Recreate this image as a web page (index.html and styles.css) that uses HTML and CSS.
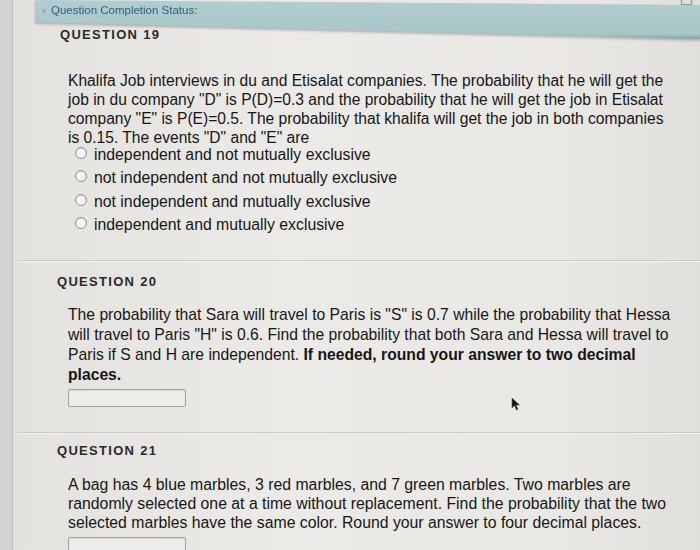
FILE: index.html
```html
<!DOCTYPE html>
<html>
<head>
<meta charset="utf-8">
<link rel="stylesheet" href="styles.css">
</head>
<body>
<div class="screen">
  <div class="topbar">
    <div class="status"><span class="tri">&#9662;</span>Question Completion Status:</div>
    <div class="corner"></div>
  </div>
  <div class="content">
    <section class="question q19">
      <h2 class="qhead">QUESTION 19</h2>
      <p class="qtext">Khalifa Job interviews in du and Etisalat companies. The probability that he will get the<br>job in du company "D" is P(D)=0.3 and the probability that he will get the job in Etisalat<br>company "E" is P(E)=0.5. The probability that khalifa will get the job in both companies<br>is 0.15. The events "D" and "E" are</p>
      <ul class="options">
        <li><span class="radio"></span>independent and not mutually exclusive</li>
        <li><span class="radio"></span>not independent and not mutually exclusive</li>
        <li><span class="radio"></span>not independent and mutually exclusive</li>
        <li><span class="radio"></span>independent and mutually exclusive</li>
      </ul>
    </section>
    <section class="question q20">
      <h2 class="qhead">QUESTION 20</h2>
      <p class="qtext">The probability that Sara will travel to Paris is "S" is 0.7 while the probability that Hessa<br>will travel to Paris "H" is 0.6. Find the probability that both Sara and Hessa will travel to<br>Paris if S and H are independent. <b>If needed, round your answer to two decimal<br>places.</b></p>
      <div class="answer-row"><div class="answer"></div><svg class="cursor" width="10" height="14" viewBox="0 0 10 14"><path d="M1 1 L1 11 L3.5 8.5 L5.5 13 L7 12.3 L5 8 L8.5 8 Z" fill="#111" stroke="#555" stroke-width="0.6"/></svg></div>
    </section>
    <section class="question q21">
      <h2 class="qhead">QUESTION 21</h2>
      <p class="qtext">A bag has 4 blue marbles, 3 red marbles, and 7 green marbles. Two marbles are<br>randomly selected one at a time without replacement. Find the probability that the two<br>selected marbles have the same color. Round your answer to four decimal places.</p>
      <div class="answer-row"><div class="answer"></div></div>
    </section>
  </div>
</div>
</body>
</html>
```
FILE: styles.css
```css
html, body {
  margin: 0;
  padding: 0;
}
body {
  width: 700px;
  height: 550px;
  overflow: hidden;
  background: #e7e6e2;
  font-family: "Liberation Sans", Arial, Helvetica, sans-serif;
  color: #161616;
}
.screen {
  height: 550px;
  border-left: 12px solid #d3d3d1;
  box-shadow: inset 1px 0 0 #bdbdbb;
  background: linear-gradient(90deg, #e3e2de 0%, #ebeae6 40%, #e9e8e4 80%, #e0dfdb 100%);
}
.topbar {
  position: relative;
  height: 22px;
  margin-left: 23px;
  filter: drop-shadow(0 2px 1px rgba(0,0,0,0.22));
}
.topbar::before {
  content: "";
  position: absolute;
  left: 0;
  right: 0;
  top: 0;
  height: 40px;
  background: linear-gradient(180deg, #b1cdd0 0%, #a8c5c8 85%, #7f9a9d 100%);
  clip-path: polygon(0 0, 100% 5px, 100% 39px, 0 22px);
}
.status {
  position: relative;
  font-size: 11.5px;
  line-height: 21px;
  color: #2f5d82;
  padding-left: 7px;
}
.tri {
  color: #9aa7a8;
  font-size: 9px;
  margin-right: 4px;
}
.corner {
  position: absolute;
  right: 8px;
  top: -4px;
  width: 9px;
  height: 8px;
  border: 1px solid #999;
  border-top: none;
}
.content {
  padding-left: 6px;
}
.question {
  border-top: 1px solid #c9c8c4;
  box-shadow: inset 0 1px 0 #f2f2ef;
}
.q19 {
  border-top: none;
  box-shadow: none;
}
.qhead {
  margin: 0;
  font-size: 13px;
  line-height: 15px;
  font-weight: bold;
  letter-spacing: 1.3px;
  color: #2a2a2a;
}
.q19 .qhead {
  padding: 5px 0 0 42px;
}
.q20 .qhead {
  padding: 13px 0 0 39px;
}
.q21 .qhead {
  padding: 10px 0 0 39px;
}
.qtext {
  margin: 0;
  font-size: 15.8px;
  line-height: 19px;
  padding-left: 50px;
  white-space: nowrap;
}
.q19 .qtext {
  font-size: 15.6px;
  padding-top: 29px;
}
.q20 .qtext {
  font-size: 15.7px;
  padding-top: 16px;
  line-height: 20px;
}
.q21 .qtext {
  padding-top: 17px;
}
.options {
  list-style: none;
  margin: -4px 0 0 0;
  padding: 0 0 23px 57px;
}
.options li {
  display: flex;
  align-items: center;
  height: 23.5px;
  font-size: 15.8px;
}
.radio {
  width: 10px;
  height: 10px;
  border: 1px solid #8a949c;
  border-radius: 50%;
  background: radial-gradient(circle at 50% 40%, #fbfbfa 0%, #ecebe9 100%);
  box-shadow: inset 0 1px 1px rgba(0,0,0,0.12);
  margin-right: 7px;
  margin-top: -4px;
}
.answer-row {
  position: relative;
  padding: 4px 0 0 50px;
  height: 18px;
}
.q20 .answer-row {
  height: 43px;
}
.q21 .answer-row {
  padding-top: 5px;
}
.answer {
  width: 116px;
  height: 16px;
  border: 1px solid #a0a09e;
  border-radius: 2px;
  background: #edecea;
  box-shadow: inset 0 1px 1px rgba(0,0,0,0.08);
}
.cursor {
  position: absolute;
  left: 493px;
  top: 12px;
}
```
